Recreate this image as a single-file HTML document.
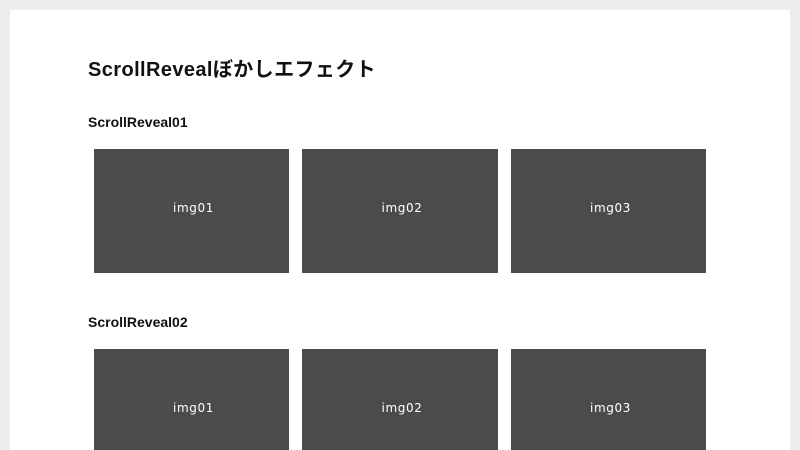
<!DOCTYPE html>
<html><head><meta charset="utf-8"><style>
html,body{margin:0;padding:0;background:#eeeeee;width:800px;height:450px;overflow:hidden;position:relative;}
.panel{position:absolute;left:10px;top:10px;width:780px;height:440px;background:#fff;}
h1{position:absolute;left:88px;top:57px;margin:0;font:bold 20px "Liberation Sans","Noto Sans CJK JP",sans-serif;letter-spacing:0.4px;color:#111;line-height:26px;}
h2{position:absolute;left:88px;margin:0;font:bold 14px "Liberation Sans",sans-serif;color:#111;line-height:18px;}
.b{position:absolute;width:195px;height:124px;background:#4b4b4b;color:#fff;font:12px "DejaVu Sans","Liberation Sans",sans-serif;letter-spacing:0.6px;display:flex;align-items:center;justify-content:center;overflow:hidden;}
.b span{position:relative;top:-3px;left:2px}
</style></head><body>
<div class="panel"></div>
<h1>ScrollRevealぼかしエフェクト</h1>
<h2 style="top:113px">ScrollReveal01</h2>
<div class="b" style="left:94px;top:149px"><span>img01</span></div>
<div class="b" style="left:302px;top:149px;width:196px"><span>img02</span></div>
<div class="b" style="left:511px;top:149px"><span>img03</span></div>
<h2 style="top:313px">ScrollReveal02</h2>
<div class="b" style="left:94px;top:349px;height:101px;align-items:flex-start"><span style="top:52px">img01</span></div>
<div class="b" style="left:302px;top:349px;width:196px;height:101px;align-items:flex-start"><span style="top:52px">img02</span></div>
<div class="b" style="left:511px;top:349px;height:101px;align-items:flex-start"><span style="top:52px">img03</span></div>
</body></html>
